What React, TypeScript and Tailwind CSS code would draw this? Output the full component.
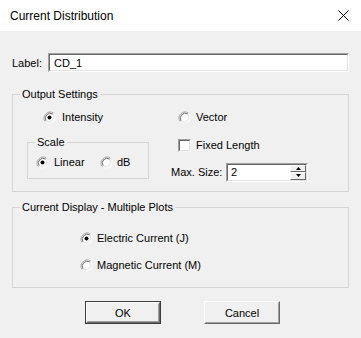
import React from "react";

function Radio({ checked }: { checked?: boolean }) {
  return (
    <svg width="13" height="13" viewBox="0 0 13 13" className="shrink-0">
      <circle cx="6.5" cy="6.5" r="6" fill="#ffffff" />
      <path d="M2.3 10.7 A6 6 0 0 1 10.7 2.3" fill="none" stroke="#a0a0a0" strokeWidth="1" />
      <path d="M10.7 2.3 A6 6 0 0 1 2.3 10.7" fill="none" stroke="#f4f4f4" strokeWidth="1" />
      <path d="M3.1 9.9 A4.9 4.9 0 0 1 9.9 3.1" fill="none" stroke="#696969" strokeWidth="1" />
      <path d="M9.9 3.1 A4.9 4.9 0 0 1 3.1 9.9" fill="none" stroke="#e3e3e3" strokeWidth="1" />
      {checked && <circle cx="6.5" cy="6.5" r="2" fill="#000000" />}
    </svg>
  );
}

function Checkbox() {
  return (
    <div className="w-[13px] h-[13px] bg-white border border-t-[#a0a0a0] border-l-[#a0a0a0] border-b-[#f4f4f4] border-r-[#f4f4f4] shrink-0">
      <div className="w-full h-full border border-t-[#696969] border-l-[#696969] border-b-[#e3e3e3] border-r-[#e3e3e3]" />
    </div>
  );
}

function Sunken({ className, children }: { className?: string; children?: React.ReactNode }) {
  return (
    <div className={`bg-white border border-t-[#a0a0a0] border-l-[#a0a0a0] border-b-white border-r-white ${className ?? ""}`}>
      <div className="h-full border border-t-[#696969] border-l-[#696969] border-b-[#e3e3e3] border-r-[#e3e3e3] flex items-center">
        {children}
      </div>
    </div>
  );
}

function Group({ title, className, children }: { title: string; className?: string; children?: React.ReactNode }) {
  return (
    <div className={`relative border border-[#d5d5d5] ${className ?? ""}`}>
      <span className="absolute -top-[9px] left-[7px] bg-[#f0f0f0] px-[2px] leading-[16px] whitespace-nowrap">{title}</span>
      {children}
    </div>
  );
}

function Button({ label, primary }: { label: string; primary?: boolean }) {
  return (
    <div className={`w-[76px] h-[23px] ${primary ? "border border-[#3c3c3c]" : ""}`}>
      <div className="h-full border border-t-white border-l-white border-b-[#696969] border-r-[#696969] bg-[#f0f0f0]">
        <div className="h-full border border-t-[#f0f0f0] border-l-[#f0f0f0] border-b-[#a0a0a0] border-r-[#a0a0a0] flex items-center justify-center">
          {label}
        </div>
      </div>
    </div>
  );
}

export default function App() {
  return (
    <div className="w-[361px] h-[338px] bg-[#f0f0f0] text-[11px] text-black font-['Liberation_Sans',Arial,sans-serif] leading-[16px] overflow-hidden whitespace-nowrap">
      {/* Title bar */}
      <div className="h-[31px] bg-white flex items-center justify-between pl-[10px] pr-[12px]">
        <span className="text-[12px]">Current Distribution</span>
        <svg width="11" height="11" viewBox="0 0 11 11">
          <path d="M0.5 0.5 L10.5 10.5 M10.5 0.5 L0.5 10.5" stroke="#000" strokeWidth="1" />
        </svg>
      </div>

      <div className="px-[12px]">
        {/* Label */}
        <div className="mt-[22px] flex items-center h-[19px]">
          <span className="w-[36px]">Label:</span>
          <Sunken className="flex-1 h-[19px]">
            <span className="pl-[4px]">CD_1</span>
          </Sunken>
        </div>

        {/* Output Settings */}
        <Group title="Output Settings" className="mt-[22px] h-[98px] flex">
          <div className="w-[158px] pl-[14px]">
            <div className="flex items-center gap-[6px] mt-[14px] ml-[16px] h-[16px]">
              <Radio checked />
              <span>Intensity</span>
            </div>
            <Group title="Scale" className="mt-[17px] w-[122px] h-[37px]">
              <div className="flex items-center mt-[11px] ml-[8px] h-[16px]">
                <Radio checked />
                <span className="ml-[5px] w-[46px]">Linear</span>
                <Radio />
                <span className="ml-[4px]">dB</span>
              </div>
            </Group>
          </div>
          <div className="flex-1">
            <div className="flex items-center gap-[5px] mt-[14px] ml-[7px] h-[16px]">
              <Radio />
              <span>Vector</span>
            </div>
            <div className="flex items-center gap-[5px] mt-[12px] ml-[7px] h-[16px]">
              <Checkbox />
              <span>Fixed Length</span>
            </div>
            <div className="flex items-center mt-[10px] h-[18px]">
              <span className="w-[55px]">Max. Size:</span>
              <Sunken className="w-[82px] h-[19px]">
                <span className="pl-[3px] flex-1">2</span>
                <div className="flex flex-col w-[16px] h-full">
                  <div className="flex-1 bg-[#f0f0f0] border border-t-white border-l-white border-b-[#696969] border-r-[#696969] flex items-center justify-center">
                    <svg width="5" height="3" viewBox="0 0 5 3"><path d="M2.5 0 L5 3 L0 3 Z" fill="#000" /></svg>
                  </div>
                  <div className="flex-1 bg-[#f0f0f0] border border-t-white border-l-white border-b-[#696969] border-r-[#696969] flex items-center justify-center">
                    <svg width="5" height="3" viewBox="0 0 5 3"><path d="M0 0 L5 0 L2.5 3 Z" fill="#000" /></svg>
                  </div>
                </div>
              </Sunken>
            </div>
          </div>
        </Group>

        {/* Current Display */}
        <Group title="Current Display - Multiple Plots" className="mt-[15px] h-[81px]">
          <div className="pl-[67px] pt-[22px] flex flex-col gap-[11px]">
            <div className="flex items-center gap-[4px] h-[16px]">
              <Radio checked />
              <span>Electric Current (J)</span>
            </div>
            <div className="flex items-center gap-[4px] h-[16px]">
              <Radio />
              <span>Magnetic Current (M)</span>
            </div>
          </div>
        </Group>

        {/* Buttons */}
        <div className="mt-[13px] flex pl-[73px] gap-[43px]">
          <Button label="OK" primary />
          <Button label="Cancel" />
        </div>
      </div>
    </div>
  );
}
